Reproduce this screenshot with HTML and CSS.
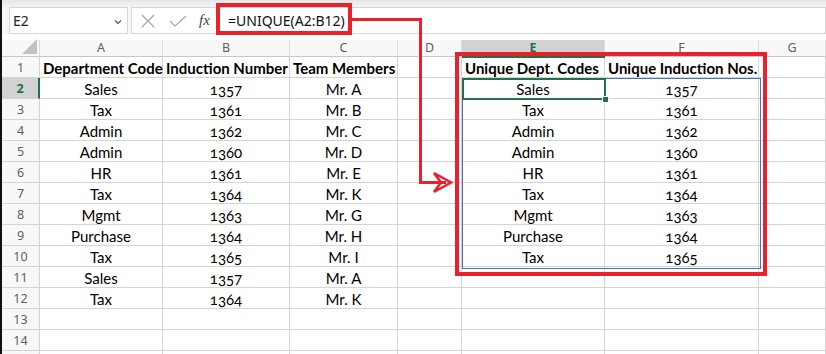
FILE: index.html
```html
<!DOCTYPE html>
<html lang="en">
<head>
  <meta charset="UTF-8" />
  <title>UNIQUE function – Excel</title>
  <link rel="stylesheet" href="styles.css">
</head>
<body>

<div class="app">
  <div class="top-strip"></div>

  <div class="formula-bar">
    <div class="name-box">
      <span>E2</span>
      <svg class="chevron" width="8" height="6" viewBox="0 0 8 6"><path d="M1 1.5 L4 4.5 L7 1.5" fill="none" stroke="#555" stroke-width="1.2"/></svg>
    </div>
    <div class="fx-tools">
      <svg width="14" height="14" viewBox="0 0 14 14"><path d="M1 1 L13 13 M13 1 L1 13" stroke="#a6a6a6" stroke-width="1.2" fill="none"/></svg>
      <svg width="18" height="12" viewBox="0 0 18 12"><path d="M1 6 L6 11 L17 1" stroke="#a6a6a6" stroke-width="1.2" fill="none"/></svg>
      <span class="fx">fx</span>
    </div>
    <div class="formula-input">=UNIQUE(A2:B12)</div>
  </div>

  <table class="grid">
    <colgroup>
      <col style="width:38px"><col style="width:123px"><col style="width:127px"><col style="width:108px">
      <col style="width:64px"><col style="width:143px"><col style="width:154px"><col style="width:67px">
    </colgroup>
    <tr class="col-heads">
      <th class="corner"><div class="corner-tri"></div></th>
      <th>A</th><th>B</th><th>C</th><th>D</th><th class="active">E</th><th>F</th><th>G</th>
    </tr>
    <tr class="title-row">
      <th>1</th>
      <td>Department Code</td><td>Induction Number</td><td>Team Members</td><td></td>
      <td>Unique Dept. Codes</td><td>Unique Induction Nos.</td><td></td>
    </tr>
    <tr><th class="active">2</th><td>Sales</td><td class="num">1357</td><td>Mr. A</td><td></td><td>Sales</td><td class="num">1357</td><td></td></tr>
    <tr><th>3</th><td>Tax</td><td class="num">1361</td><td>Mr. B</td><td></td><td>Tax</td><td class="num">1361</td><td></td></tr>
    <tr><th>4</th><td>Admin</td><td class="num">1362</td><td>Mr. C</td><td></td><td>Admin</td><td class="num">1362</td><td></td></tr>
    <tr><th>5</th><td>Admin</td><td class="num">1360</td><td>Mr. D</td><td></td><td>Admin</td><td class="num">1360</td><td></td></tr>
    <tr><th>6</th><td>HR</td><td class="num">1361</td><td>Mr. E</td><td></td><td>HR</td><td class="num">1361</td><td></td></tr>
    <tr><th>7</th><td>Tax</td><td class="num">1364</td><td>Mr. K</td><td></td><td>Tax</td><td class="num">1364</td><td></td></tr>
    <tr><th>8</th><td>Mgmt</td><td class="num">1363</td><td>Mr. G</td><td></td><td>Mgmt</td><td class="num">1363</td><td></td></tr>
    <tr><th>9</th><td>Purchase</td><td class="num">1364</td><td>Mr. H</td><td></td><td>Purchase</td><td class="num">1364</td><td></td></tr>
    <tr><th>10</th><td>Tax</td><td class="num">1365</td><td>Mr. I</td><td></td><td>Tax</td><td class="num">1365</td><td></td></tr>
    <tr><th>11</th><td>Sales</td><td class="num">1357</td><td>Mr. A</td><td></td><td></td><td></td><td></td></tr>
    <tr><th>12</th><td>Tax</td><td class="num">1364</td><td>Mr. K</td><td></td><td></td><td></td><td></td></tr>
    <tr><th>13</th><td></td><td></td><td></td><td></td><td></td><td></td><td></td></tr>
    <tr><th>14</th><td></td><td></td><td></td><td></td><td></td><td></td><td></td></tr>
    <tr><th></th><td></td><td></td><td></td><td></td><td></td><td></td><td></td></tr>
  </table>

  <!-- overlays: selection, spill range and annotation -->
  <div class="spill-range"></div>
  <div class="head-underline"></div>
  <div class="selection"><div class="fill-handle"></div></div>
  <div class="callout formula-callout"></div>
  <div class="callout result-callout"></div>
  <svg class="arrow" width="826" height="354" viewBox="0 0 826 354">
    <path d="M352 19.5 H420.5 V182.5 H446" fill="none" stroke="#e8212b" stroke-width="3"/>
    <path d="M434 173 L451 182.5 L434 192 L441 182.5 Z" fill="none" stroke="#e8212b" stroke-width="2.5" stroke-linejoin="miter"/>
  </svg>
</div>

</body>
</html>
```

FILE: styles.css
```css
:root {
  --grid-line: #d4d4d4;
  --head-bg: #f8f8f8;
  --head-text: #5f5f5f;
  --excel-green: #217346;
  --callout-red: #e8212b;
  --range-blue: #4472c4;
}

html, body {
  margin: 0;
  background: #fff;
}

.app {
  position: relative;
  width: 824px;
  height: 354px;
  overflow: hidden;
  border-left: 2px solid #111;
  background: #fff;
  font-family: "Lato", "Liberation Sans", sans-serif;
}

.top-strip {
  height: 7px;
  background: linear-gradient(#e6e6e6, #f3f3f3);
}

.formula-bar {
  display: flex;
  align-items: stretch;
  height: 27px;
  padding: 0 0 0 7px;
  background: #f7f7f7;
  font-family: "Noto Sans", "Liberation Sans", sans-serif;
}

.name-box {
  width: 119px;
  display: flex;
  align-items: center;
  justify-content: space-between;
  padding: 0 5px 0 3px;
  box-sizing: border-box;
  background: #fff;
  border: 1px solid #d6d6d6;
  font-size: 14px;
  color: #222;
  margin-right: 3px;
}
.name-box .chevron {
  margin-top: 2px;
}

.fx-tools {
  width: 87px;
  box-sizing: border-box;
  display: flex;
  align-items: center;
  gap: 14px;
  padding-left: 9px;
  background: #fff;
  border: 1px solid #d6d6d6;
  border-right: none;
}
.fx {
  font-family: "Liberation Serif", serif;
  font-style: italic;
  font-size: 15px;
  color: #444;
  margin-left: -2px;
}

.formula-input {
  flex: 1;
  display: flex;
  align-items: center;
  padding-left: 9px;
  background: #fff;
  border: 1px solid #d6d6d6;
  font-size: 14px;
  color: #111;
}

.grid {
  margin-top: 6px;
  table-layout: fixed;
  border-collapse: separate;
  border-spacing: 0;
  width: 824px;
}

.grid th, .grid td {
  padding: 0;
  border-right: 1px solid var(--grid-line);
  border-bottom: 1px solid var(--grid-line);
  white-space: nowrap;
  overflow: visible;
}

.grid th {
  background: var(--head-bg);
  color: var(--head-text);
  font-family: "Noto Sans", "Liberation Sans", sans-serif;
  font-weight: normal;
  font-size: 12.5px;
  text-align: center;
  height: 20px;
}

.col-heads th {
  height: 16px;
  line-height: 16px;
  border-right-color: #dcdcdc;
  border-bottom-color: #c8c8c8;
}
.col-heads th.active {
  background: #d2d2d2;
  color: var(--excel-green);
  font-weight: bold;
}
.grid th.corner {
  position: relative;
}
.corner-tri {
  position: absolute;
  right: 2px;
  bottom: 2px;
  width: 0;
  height: 0;
  border-left: 15px solid transparent;
  border-bottom: 15px solid #c2c2c2;
}

.grid tr th.active:first-child {
  background: #d2d2d2;
  color: var(--excel-green);
  font-weight: bold;
  border-right: 2px solid var(--excel-green);
}

.grid td {
  height: 20px;
  font-size: 15px;
  color: #000;
  text-align: center;
  vertical-align: bottom;
  line-height: 17px;
}

.title-row td {
  text-align: left;
  font-weight: bold;
  padding-left: 3px;
}

.num {
  font-variant-numeric: oldstyle-nums;
}

/* overlays */
.spill-range {
  position: absolute;
  left: 460px;
  top: 78px;
  width: 297px;
  height: 189px;
  border: 1px solid var(--range-blue);
}

.head-underline {
  position: absolute;
  left: 460px;
  top: 56px;
  width: 143px;
  height: 2px;
  background: var(--excel-green);
}

.selection {
  position: absolute;
  left: 460px;
  top: 78px;
  width: 140px;
  height: 18px;
  border: 2px solid var(--excel-green);
}
.fill-handle {
  position: absolute;
  right: -5px;
  bottom: -5px;
  width: 5px;
  height: 5px;
  background: var(--excel-green);
  border: 1px solid #fff;
}

.callout {
  position: absolute;
  border: 4px solid var(--callout-red);
  box-sizing: border-box;
}
.formula-callout {
  left: 214px;
  top: 3px;
  width: 136px;
  height: 32px;
}
.result-callout {
  left: 453px;
  top: 52px;
  width: 312px;
  height: 224px;
}

.arrow {
  position: absolute;
  left: -2px;
  top: 0;
  pointer-events: none;
}
```
